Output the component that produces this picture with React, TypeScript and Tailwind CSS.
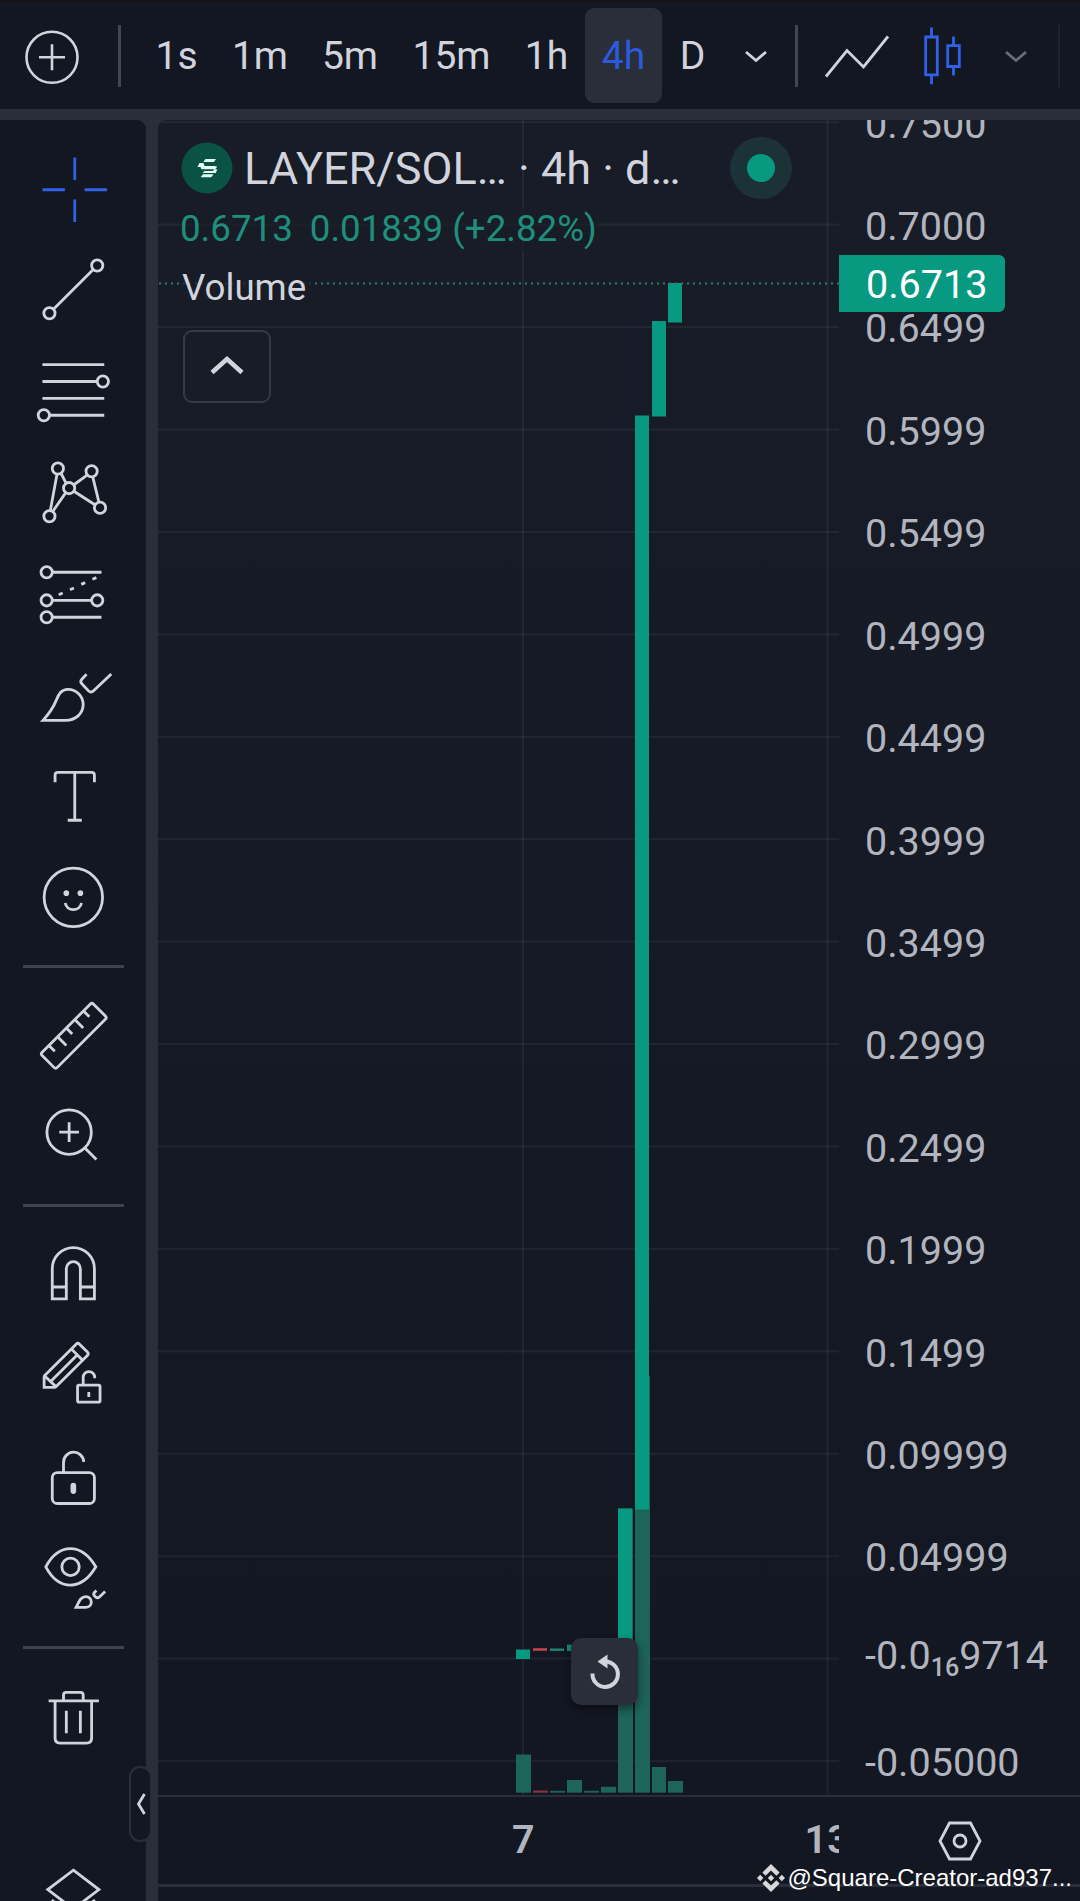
import type { ReactNode } from "react";
import clsx from "clsx";

const intervals = [
  { label: "1s", width: "w-[77px]" },
  { label: "1m", width: "w-[90px]" },
  { label: "5m", width: "w-[90px]" },
  { label: "15m", width: "w-[113px]" },
  { label: "1h", width: "w-[77px]" },
  { label: "4h", width: "w-[77px]", active: true },
  { label: "D", width: "w-[61px]" },
];

const priceLabels = [
  "0.7500",
  "0.7000",
  "0.6499",
  "0.5999",
  "0.5499",
  "0.4999",
  "0.4499",
  "0.3999",
  "0.3499",
  "0.2999",
  "0.2499",
  "0.1999",
  "0.1499",
  "0.09999",
  "0.04999",
];

// plot coordinates: origin is the top left corner of the plot (681 x 1675)
const GRID_STEP = 102.43;
const gridRows = Array.from({ length: 17 }, (_, i) => 2.2 + i * GRID_STEP);
const gridCols = [365, 669.5];

const volumes = [
  { x: 358, y: 1634.5, w: 15, up: true },
  { x: 375, y: 1670.5, w: 15, up: false },
  { x: 392, y: 1670.8, w: 15, up: true },
  { x: 409, y: 1660, w: 15, up: true },
  { x: 426, y: 1670.8, w: 15, up: true },
  { x: 443, y: 1666.8, w: 15, up: true },
  { x: 460, y: 1388.5, w: 15, up: true },
  { x: 477, y: 1256, w: 15, up: true },
  { x: 494, y: 1647, w: 14, up: true },
  { x: 510, y: 1661, w: 15, up: true },
];

const candles = [
  { x: 358, y: 1529.5, h: 9.5, fill: "#089981" },
  { x: 375, y: 1528.2, h: 2.6, fill: "#c4454f" },
  { x: 392, y: 1528.5, h: 2.4, fill: "#238271" },
  { x: 409, y: 1524.7, h: 6.3, fill: "#128c78" },
  { x: 460, y: 1388.5, h: 142, fill: "#089981" },
  { x: 477, y: 295.5, h: 1094, fill: "#089981" },
  { x: 494, y: 201, h: 95.5, fill: "#089981" },
  { x: 510, y: 163, h: 39.5, fill: "#089981" },
];

function ToolIcon({ children }: { children: ReactNode }) {
  return (
    <div className="flex h-[101.35px] w-full shrink-0 items-center justify-center">
      <svg
        viewBox="0 0 28 28"
        className="size-[78.7px]"
        fill="none"
        stroke="#d1d4dc"
        strokeWidth="1"
      >
        {children}
      </svg>
    </div>
  );
}

function ToolDivider() {
  return (
    <div className="flex h-[36.3px] w-full shrink-0 items-center justify-center">
      <div className="h-[3px] w-[101px] bg-[#3e424d]" />
    </div>
  );
}

function Chevron({ color }: { color: string }) {
  return (
    <svg viewBox="0 0 24 14" className="h-[14px] w-[24px]" fill="none" stroke={color} strokeWidth="2.8">
      <path d="M2 3l10 8.500 10-8.500" />
    </svg>
  );
}

function Toolbar() {
  return (
    <header className="flex h-[109px] shrink-0 items-center border-t-2 border-[#131318] bg-[#131722] text-[39px] text-[#d1d4dc]">
      <svg viewBox="0 0 54 54" className="ml-[25px] size-[54px] overflow-visible" fill="none" stroke="#d1d4dc" strokeWidth="2.6">
        <circle cx="27" cy="28.300" r="25.500" />
        <path d="M27 15.300v26M14 28.300h26" />
      </svg>
      <div className="ml-[39px] h-[62px] w-[3px] bg-[#434651]" />
      <nav className="ml-[17px] flex">
        {intervals.map((item) => (
          <button
            key={item.label}
            className={clsx(
              "flex h-[95px] items-center justify-center rounded-[9px] pt-[2px]",
              item.width,
              item.active && "bg-[#2a2e39] text-[#2b5bdc]"
            )}
          >
            {item.label}
          </button>
        ))}
      </nav>
      <div className="flex w-[72px] pl-[21px]">
        <Chevron color="#d1d4dc" />
      </div>
      <div className="h-[62px] w-[3px] bg-[#434651]" />
      <svg viewBox="0 0 64 46" className="ml-[27px] h-[46px] w-[64px]" fill="none" stroke="#d1d4dc" strokeWidth="2.8">
        <path d="M1 43.500L22 17.500 38.500 34 63 3.500" />
      </svg>
      <svg viewBox="0 0 38 60" className="ml-[34px] h-[60px] w-[38px]" fill="none" stroke="#2f62e8" strokeWidth="2.8">
        <path d="M2.700 11h11.600v37.800H2.700zM8.500 1.500v9.500M8.500 48.800v9.500M24.700 19.700h11.600v20.800H24.700zM30.500 10.500v9M30.500 40.500v9" />
      </svg>
      <div className="ml-[43px] flex">
        <Chevron color="#6a6d78" />
      </div>
      <div className="ml-[30px] h-[62px] w-[2px] bg-[#1f232e]" />
    </header>
  );
}

function Sidebar() {
  return (
    <aside className="relative w-[146px] shrink-0">
      <div className="flex h-full flex-col overflow-hidden rounded-tr-[9px] bg-[#131722] pt-[17.5px]">
        <ToolIcon>
          <path stroke="#2f62e8" d="M14.500 3v8M14.500 18v8M3 14.500h8M18 14.500h8" />
        </ToolIcon>
        <ToolIcon>
          <circle cx="22.500" cy="5.500" r="2" />
          <circle cx="5.500" cy="22.500" r="2" />
          <path d="M7 21L21 7" />
        </ToolIcon>
        <ToolIcon>
          <path d="M3 4.500h22M3 10.500h19.500M3 16.500h22M5.500 22.500H25" />
          <circle cx="24.500" cy="10.500" r="2" />
          <circle cx="3.500" cy="22.500" r="2" />
        </ToolIcon>
        <ToolIcon>
          <circle cx="8.500" cy="5.500" r="2" />
          <circle cx="20.500" cy="6.500" r="2" />
          <circle cx="12.500" cy="12.500" r="2" />
          <circle cx="23.500" cy="19.500" r="2" />
          <circle cx="5.500" cy="22.500" r="2" />
          <path d="M9.600 7.200l1.800 3.500M14.200 11.300l4.700-3.400M20.900 8.500l2.200 9M14.200 13.600l7.600 4.900M11.300 14.100l-4.700 6.800M8.200 7.500L5.800 20.500" />
        </ToolIcon>
        <ToolIcon>
          <circle cx="4.500" cy="6.500" r="2" />
          <circle cx="4.500" cy="16.500" r="2" />
          <circle cx="4.500" cy="22.500" r="2" />
          <circle cx="22.500" cy="16.500" r="2" />
          <path d="M6.500 6.500H24M6.500 16.500h14M6.500 22.500H24" />
          <path d="M8.800 14.500l1.400-.6M12.800 12.700l1.400-.6M16.800 10.800l1.400-.6M20.800 9l1.400-.6" />
        </ToolIcon>
        <ToolIcon>
          <path d="M3.200 22.900C5.600 20.300 7 18 7.900 15.800 8.800 13.500 9.700 11.900 12 11.900a5.400 5.400 0 0 1 5.500 5.400c0 3.200-2.700 5.600-6.300 5.600z" />
          <path d="M18.700 6.500l-1.600 1.700q-.9.900 0 1.800l2.300 2.400q.9.900 1.800 0l6.300-6" />
        </ToolIcon>
        <ToolIcon>
          <path d="M7.500 9V6.500q0-1 1-1h12q1 0 1 1V9M14.500 5.500v17M12 22.500h5" />
        </ToolIcon>
        <ToolIcon>
          <circle cx="14" cy="14" r="10.400" />
          <circle cx="11.500" cy="12.500" r="1" fill="#d1d4dc" stroke="none" />
          <circle cx="16.500" cy="12.500" r="1" fill="#d1d4dc" stroke="none" />
          <path d="M11.100 16c.3 1.500 1.500 2.400 2.900 2.400s2.600-.9 2.900-2.400" />
        </ToolIcon>
        <ToolDivider />
        <ToolIcon>
          <path d="M20 2.900q.6-.6 1.200 0l4.200 4.200q.6.600 0 1.200L8.300 25.400q-.6.600-1.200 0L2.900 21.200q-.6-.6 0-1.200z" />
          <path d="M5.300 17.600l2.100 2.100M8.400 14.500l3.100 3.100M11.500 11.400l2.100 2.100M14.500 8.400l3 3M17.600 5.300l2.100 2.100" />
        </ToolIcon>
        <ToolIcon>
          <circle cx="12.500" cy="12.500" r="7.900" />
          <path d="M12.500 9v7M9 12.500h7M18.200 18.200l4 4" />
        </ToolIcon>
        <ToolDivider />
        <ToolIcon>
          <path d="M6.500 22.700V12a7.500 7.500 0 0 1 15 0v10.700h-5V12a2.500 2.500 0 0 0-5 0v10.700zM6.500 18.500h5M16.500 18.500h5" />
        </ToolIcon>
        <ToolIcon>
          <path d="M3.600 18.200v-3.500q0-.4.300-.7L15 2.900q.6-.6 1.200 0l2.800 2.800q.6.600 0 1.200L7.900 18q-.3.300-.7.300H3.600zM3.800 14.200l4.100 3.900M6.100 16l9-9M13.300 4.600l4.100 4.100" />
          <path d="M16 17.500h7q.5 0 .5.500v5q0 .5-.5.500h-7q-.5 0-.5-.5v-5q0-.5.500-.5zM17.500 17.500v-2.800a2 2 0 0 1 4.100 0v.3M19.500 19.900v1.800" />
        </ToolIcon>
        <ToolIcon>
          <rect x="6.500" y="12.300" width="15" height="11" rx="1.800" />
          <path d="M10.500 12.300V8.800a3.600 3.600 0 0 1 7.200-.3" />
          <rect x="13" y="15.900" width="2" height="4" rx="1" fill="#d1d4dc" stroke="none" />
        </ToolIcon>
        <ToolIcon>
          <path d="M4.200 9.900C6 6.500 9 3.400 13 3.400s7 3.100 9 6.500c-2 3.400-5 6.500-9 6.500s-7-3.100-8.800-6.500z" />
          <circle cx="13" cy="9.900" r="3.100" />
          <path d="M15 24.300c.9-1.600 1.400-3.800 3.500-3.800a1.900 1.900 0 0 1 1.900 1.900c0 1.200-.9 1.900-2.100 1.900zM22.200 18.300l-.7.700q-.5.600 0 1.200l.5.500q.6.500 1.200 0l2.100-2" />
        </ToolIcon>
        <ToolDivider />
        <ToolIcon>
          <path d="M5.200 8.500h17.900M10.500 8.500V6.500q0-1 1-1h5q1 0 1 1v2M7.500 8.500v13.200q0 1.800 1.800 1.800h9.400q1.800 0 1.800-1.800V8.500M11.500 12v8M16.500 12v8" />
        </ToolIcon>
        <div className="mt-[79.500px] shrink-0">
          <ToolIcon>
            <path d="M14 4.700l9.100 6.900-9.100 6.900-9.100-6.900zM6.300 15.300L14 21.200l7.700-5.900" />
          </ToolIcon>
        </div>
      </div>
      {/* collapse handle over the panel edge */}
      <button className="absolute top-[1646px] left-[129px] flex h-[76px] w-[23px] items-center justify-center rounded-[11px] border-2 border-[#2a2e39] bg-[#131722]">
        <svg viewBox="0 0 10 22" className="ml-px h-[22px] w-[10px]" fill="none" stroke="#d1d4dc" strokeWidth="2.800">
          <path d="M8.500 1L2.500 11l6 10" />
        </svg>
      </button>
    </aside>
  );
}

function Legend() {
  return (
    <div className="absolute top-[17px] left-[22px] text-[#d1d4dc]">
      <div className="flex h-[62px] items-center">
        <svg viewBox="0 0 52 52" className="ml-[1px] size-[52px]">
          <circle cx="26" cy="26" r="25.500" fill="#0a5244" />
          <g fill="#e6fff5">
            <path d="M24.500 17h10.500l-2.200 3H22.300z" />
            <path d="M18.500 21h4l1 3h10l2.700.8-2 2.500H20.500l-1-2.300h-3z" />
            <path d="M33 27.300h3.300l-1.500 3.700H21.500l2-2h8.500z" />
            <path d="M22 32.300h10.500l-2.300 3H19.700z" />
          </g>
        </svg>
        <div className="ml-[11px] w-[432px] text-[45px] leading-none whitespace-pre">LAYER/SOL… · 4h · d…</div>
        <div className="ml-[54px] flex size-[62px] items-center justify-center rounded-full bg-[#1b3237]">
          <div className="size-[28px] rounded-full bg-[#089981]" />
        </div>
      </div>
      <div className="mt-[8px] flex w-[418px] gap-[17px] bg-[#181c27]/70 text-[36.700px] leading-[44px] whitespace-nowrap text-[#1f8f7b]">
        <span>0.6713</span>
        <span>0.01839 (+2.82%)</span>
      </div>
      <div className="mt-[15px] w-fit bg-[#181c27]/70 pr-[6px] pl-[2px] text-[36.700px] leading-[44px]">Volume</div>
      <button className="mt-[20px] ml-[3px] flex h-[73px] w-[88px] items-center justify-center rounded-[9px] border-2 border-[#363a45] bg-[#181c27]">
        <svg viewBox="0 0 34 20" className="mb-[3px] h-[20px] w-[34px]" fill="none" stroke="#d1d4dc" strokeWidth="4.600">
          <path d="M2 17.500L17 4l15 13.500" />
        </svg>
      </button>
    </div>
  );
}

function Plot() {
  return (
    <div className="relative h-[1675px] w-[681px] shrink-0 overflow-hidden">
      <svg viewBox="0 0 681 1675" className="h-[1675px] w-[681px]">
        {gridRows.map((y) => (
          <rect key={y} x="0" y={y - 1} width="681" height="2" fill="#f0f3fa" fillOpacity="0.06" />
        ))}
        {gridCols.map((x) => (
          <rect key={x} x={x - 1} y="0" width="2" height="1675" fill="#f0f3fa" fillOpacity="0.06" />
        ))}
        {volumes.map((v) => (
          <rect
            key={v.x}
            x={v.x}
            y={v.y}
            width={v.w}
            height={1672.7 - v.y}
            fill={v.up ? "#1d6459" : "#83343f"}
          />
        ))}
        {candles.map((c) => (
          <rect key={c.x} x={c.x} y={c.y} width="14" height={c.h} fill={c.fill} />
        ))}
        <path d="M1 163.500H681" stroke="#2f7f72" strokeWidth="2" strokeDasharray="2 4" />
      </svg>
      <Legend />
      <button className="absolute top-[1518px] left-[413px] flex size-[67px] items-center justify-center rounded-[10px] bg-[#2a2e39] shadow-[0_4px_10px_rgba(0,0,0,0.45)]">
        <svg viewBox="0 0 32 36" className="size-[36px]" fill="none">
          <path d="M3.500 19.500A12.700 12.700 0 1 0 16.500 7.500" stroke="#d1d4dc" strokeWidth="4" />
          <path d="M8.500 7.500L18.500.5v14z" fill="#d1d4dc" />
        </svg>
      </button>
    </div>
  );
}

function PriceAxis() {
  return (
    <div className="relative h-[1675px] flex-1 overflow-hidden text-[39.500px] text-[#b2b5be]">
      <div className="-mt-[47px] flex flex-col pl-[26px]">
        {priceLabels.map((label) => (
          <div key={label} className="flex h-[102.43px] shrink-0 items-center">
            {label}
          </div>
        ))}
        <div className="flex h-[102.43px] shrink-0 items-center pb-[10px]">
          <span className="leading-none">
            -0.0<span className="relative top-[7px] text-[25px] font-medium">16</span>9714
          </span>
        </div>
        <div className="flex h-[102.43px] shrink-0 items-center">-0.05000</div>
      </div>
      <div className="absolute top-[135px] left-0 flex h-[57px] w-[166px] items-center rounded-r-[6px] bg-[#089981] pt-[3px] pl-[27px] text-white">
        0.6713
      </div>
    </div>
  );
}

function TimeAxis() {
  return (
    <div className="flex h-[89px] shrink-0 border-t-2 border-[#2a2e39]">
      <div className="flex w-[681px] items-center overflow-hidden pb-[2px] text-[39.500px] font-semibold text-[#b2b5be]">
        <span className="ml-[354px]">7</span>
        <span className="ml-[270px]">13</span>
      </div>
      <div className="ml-[99px] flex items-center">
        <svg viewBox="0 0 44 40" className="h-[40px] w-[44px]" fill="none" stroke="#d1d4dc" strokeWidth="2.800">
          <path d="M11.500 2h21L42 20l-9.500 18h-21L2 20z" />
          <circle cx="22" cy="20" r="6" />
        </svg>
      </div>
    </div>
  );
}

function Watermark() {
  return (
    <div className="absolute right-[8px] bottom-[7px] flex items-center gap-[2px] font-['Liberation_Sans',Arial,sans-serif] text-[24px] leading-[32px] text-white">
      <svg viewBox="0 0 28 28" className="size-[28px]" fill="#d8d8da">
        <path d="M14 0l8.600 8.600-3.200 3.200L14 6.400l-5.400 5.400-3.200-3.200z" />
        <path d="M14 28l8.600-8.600-3.200-3.200L14 21.600l-5.400-5.400-3.200 3.200z" />
        <path d="M14 10.800l3.200 3.200-3.200 3.200-3.200-3.200zM3.200 10.800L6.400 14l-3.200 3.200L0 14zM24.800 10.800L28 14l-3.200 3.200-3.200-3.200z" />
      </svg>
      <span className="whitespace-nowrap">@Square-Creator-ad937...</span>
    </div>
  );
}

export default function App() {
  return (
    <div className="relative flex h-[1901px] w-[1080px] flex-col overflow-hidden bg-[#2a2e39] font-[Roboto,sans-serif]">
      <Toolbar />
      <div className="mt-[11px] flex min-h-0 flex-1">
        <Sidebar />
        <main className="ml-[12px] flex min-w-0 flex-1 flex-col overflow-hidden rounded-tl-[9px] bg-[#131722]">
          <div className="flex h-[1675px] shrink-0 bg-linear-to-b from-[#181c27] to-[#131722]">
            <Plot />
            <PriceAxis />
          </div>
          <TimeAxis />
          <div className="h-[3px] shrink-0 bg-[#2a2e39]" />
        </main>
      </div>
      <Watermark />
    </div>
  );
}
